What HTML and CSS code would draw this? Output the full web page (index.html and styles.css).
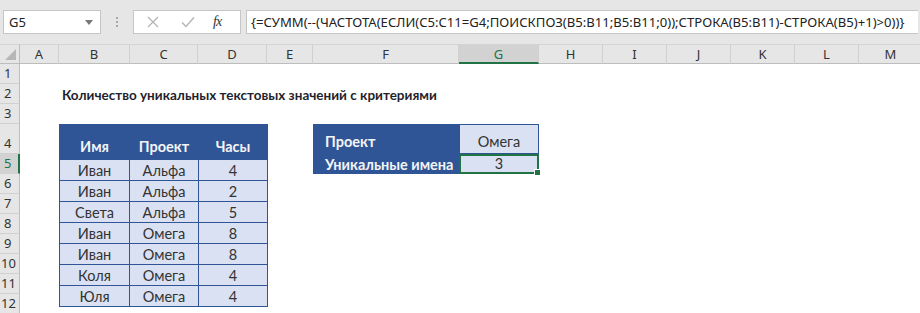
FILE: index.html
```html
<!DOCTYPE html>
<html lang="ru">
<head>
  <meta charset="UTF-8" />
  <title>Уникальные значения с критериями</title>
  <link rel="stylesheet" href="styles.css">
</head>
<body>
  <div class="topbar">
    <div class="namebox">
      <span>G5</span>
      <svg class="caret" width="8" height="5" viewBox="0 0 8 5"><path d="M0 0H8L4 5Z" fill="#777"/></svg>
    </div>
    <div class="grip"><i></i><i></i><i></i></div>
    <div class="fxbox">
      <svg width="12" height="12" viewBox="0 0 12 12"><path d="M1 1L11 11M11 1L1 11" stroke="#b4b4b4" stroke-width="1.3" fill="none"/></svg>
      <svg width="14" height="12" viewBox="0 0 14 12"><path d="M1 6.5L5 10.5L13 1.5" stroke="#b4b4b4" stroke-width="1.4" fill="none"/></svg>
      <span class="fx">fx</span>
    </div>
    <div class="formula">{=СУММ(--(ЧАСТОТА(ЕСЛИ(C5:C11=G4;ПОИСКПОЗ(B5:B11;B5:B11;0));СТРОКА(B5:B11)-СТРОКА(B5)+1)&gt;0))}</div>
  </div>

  <div class="sheet">
    <div class="corner"><span></span></div>
    <div class="colhead">A</div>
    <div class="colhead">B</div>
    <div class="colhead">C</div>
    <div class="colhead">D</div>
    <div class="colhead">E</div>
    <div class="colhead">F</div>
    <div class="colhead active">G</div>
    <div class="colhead">H</div>
    <div class="colhead">I</div>
    <div class="colhead">J</div>
    <div class="colhead">K</div>
    <div class="colhead">L</div>
    <div class="colhead">M</div>

    <div class="rowhead r1">1</div>
    <div class="rowhead r2">2</div>
    <div class="rowhead r3">3</div>
    <div class="rowhead r4">4</div>
    <div class="rowhead r5 active">5</div>
    <div class="rowhead r6">6</div>
    <div class="rowhead r7">7</div>
    <div class="rowhead r8">8</div>
    <div class="rowhead r9">9</div>
    <div class="rowhead r10">10</div>
    <div class="rowhead r11">11</div>
    <div class="rowhead r12">12</div>

    <div class="title">Количество уникальных текстовых значений с критериями</div>

    <table class="data">
      <colgroup><col class="cb"><col class="cc"><col class="cd"></colgroup>
      <thead>
        <tr><th>Имя</th><th>Проект</th><th>Часы</th></tr>
      </thead>
      <tbody>
        <tr><td>Иван</td><td>Альфа</td><td>4</td></tr>
        <tr><td>Иван</td><td>Альфа</td><td>2</td></tr>
        <tr><td>Света</td><td>Альфа</td><td>5</td></tr>
        <tr><td>Иван</td><td>Омега</td><td>8</td></tr>
        <tr><td>Иван</td><td>Омега</td><td>8</td></tr>
        <tr><td>Коля</td><td>Омега</td><td>4</td></tr>
        <tr><td>Юля</td><td>Омега</td><td>4</td></tr>
      </tbody>
    </table>

    <div class="crit">
      <div class="label tall">Проект</div>
      <div class="value tall">Омега</div>
      <div class="label">Уникальные имена</div>
      <div class="value selected">3<span class="handle"></span></div>
    </div>
  </div>
</body>
</html>
```

FILE: styles.css
```css
body {
  margin: 0;
  background-color: #fff;
  font-family: "Noto Sans", sans-serif;
  color: #222;
  overflow: hidden;
}

/* formula bar */
.topbar {
  height: 44px;
  background-color: #e6e6e6;
  display: flex;
  align-items: flex-start;
  padding: 10px 0 0 3px;
  box-sizing: border-box;
}
.namebox {
  width: 98px;
  height: 24px;
  box-sizing: border-box;
  background-color: #fff;
  border: 1px solid #c6c6c6;
  display: flex;
  align-items: center;
  justify-content: space-between;
  padding: 0 7px 0 5px;
  font-size: 13px;
  color: #222;
}
.caret {
  margin-top: 1px;
}
.grip {
  width: 32px;
  height: 24px;
  display: flex;
  flex-direction: column;
  align-items: center;
  justify-content: center;
  gap: 2px;
}
.grip i {
  width: 2px;
  height: 2px;
  background-color: #a8a8a8;
}
.fxbox {
  width: 108px;
  height: 24px;
  box-sizing: border-box;
  background-color: #fff;
  border: 1px solid #c6c6c6;
  display: flex;
  align-items: center;
  padding: 0 0 0 13px;
  gap: 22px;
}
.fx {
  font-family: "Liberation Serif", serif;
  font-style: italic;
  font-size: 14px;
  color: #333;
  margin-left: -4px;
  letter-spacing: -1px;
}
.formula {
  margin-left: 5px;
  width: 672px;
  height: 24px;
  box-sizing: border-box;
  background-color: #fff;
  border: 1px solid #c6c6c6;
  border-right: none;
  font-size: 13.1px;
  line-height: 22px;
  padding-left: 4px;
  white-space: nowrap;
  overflow: hidden;
  color: #222;
}

/* sheet grid */
.sheet {
  display: grid;
  grid-template-columns: 20px 39px 71px 68px 69px 46px 146px 80px repeat(6, 64px);
  grid-template-rows: 20px 20px 20px 20px 30px repeat(8, 20px);
  width: 920px;
  overflow: hidden;
}
.corner {
  background-color: #e6e6e6;
  border-top: 1px solid #d4d4d4;
  border-bottom: 1px solid #bdbdbd;
  border-right: 1px solid #bdbdbd;
  box-sizing: border-box;
  position: relative;
}
.corner span {
  position: absolute;
  right: 3px;
  bottom: 3px;
  width: 0;
  height: 0;
  border-left: 11px solid transparent;
  border-bottom: 11px solid #b7b7b7;
}
.colhead {
  background-color: #e6e6e6;
  border-top: 1px solid #d4d4d4;
  border-bottom: 1px solid #bdbdbd;
  border-right: 1px solid #d0d0d0;
  box-sizing: border-box;
  font-size: 13px;
  line-height: 18px;
  text-align: center;
  color: #333;
}
.colhead.active {
  background-color: #d2d2d2;
  border-bottom: 2px solid #217346;
  color: #217346;
}
.rowhead {
  grid-column: 1;
  background-color: #e6e6e6;
  border-right: 1px solid #bdbdbd;
  border-bottom: 1px solid #d0d0d0;
  box-sizing: border-box;
  font-size: 13px;
  line-height: 19px;
  display: flex;
  align-items: flex-end;
  padding-left: 4px;
  color: #333;
}
.rowhead.active {
  background-color: #d2d2d2;
  border-right: 2px solid #217346;
  color: #217346;
}
.r1 { grid-row: 2; }
.r2 { grid-row: 3; }
.r3 { grid-row: 4; }
.r4 { grid-row: 5; }
.r5 { grid-row: 6; }
.r6 { grid-row: 7; }
.r7 { grid-row: 8; }
.r8 { grid-row: 9; }
.r9 { grid-row: 10; }
.r10 { grid-row: 11; padding-left: 1px; }
.r11 { grid-row: 12; padding-left: 1px; }
.r12 { grid-row: 13; padding-left: 1px; }

.title {
  grid-column: 3 / 9;
  grid-row: 3;
  font-family: "Lato", sans-serif;
  font-weight: bold;
  font-size: 13.5px;
  color: #1f1f2e;
  padding: 3px 0 0 3px;
  white-space: nowrap;
}

/* left table */
table.data {
  grid-column: 3 / 6;
  grid-row: 5 / 13;
  border-collapse: collapse;
  table-layout: fixed;
  width: 208px;
  font-family: "Lato", sans-serif;
  font-size: 14.5px;
}
col.cb { width: 70px; }
col.cc { width: 69px; }
col.cd { width: 69px; }
table.data th {
  background-color: #2f5597;
  color: #f4f4f4;
  height: 30px;
  padding: 0 0 4px;
  vertical-align: bottom;
  border: 1px solid #2f5597;
  font-weight: bold;
}
table.data td {
  background-color: #d9e1f2;
  color: #333;
  height: 20px;
  padding: 0;
  text-align: center;
  vertical-align: bottom;
  border: 1px solid #2f5597;
  line-height: 19px;
}

/* criteria block */
.crit {
  grid-column: 7 / 9;
  grid-row: 5 / 7;
  display: grid;
  grid-template-columns: 146px 80px;
  grid-template-rows: 30px 20px;
  font-family: "Lato", sans-serif;
  font-size: 14.5px;
}
.label {
  background-color: #2f5597;
  color: #f4f4f4;
  font-weight: bold;
  padding-left: 12px;
  display: flex;
  align-items: flex-end;
  padding-bottom: 1px;
}
.label.tall {
  padding-bottom: 4px;
}
.value {
  background-color: #d9e1f2;
  color: #333;
  box-sizing: border-box;
  border: 1px solid #2f5597;
  display: flex;
  align-items: flex-end;
  justify-content: center;
  padding-bottom: 1px;
}
.value.tall {
  padding-bottom: 3px;
}
.value.selected {
  border: 2px solid #217346;
  position: relative;
  padding-bottom: 0;
}
.handle {
  position: absolute;
  right: -4px;
  bottom: -4px;
  width: 5px;
  height: 5px;
  background-color: #217346;
  border: 1px solid #fff;
}
```
